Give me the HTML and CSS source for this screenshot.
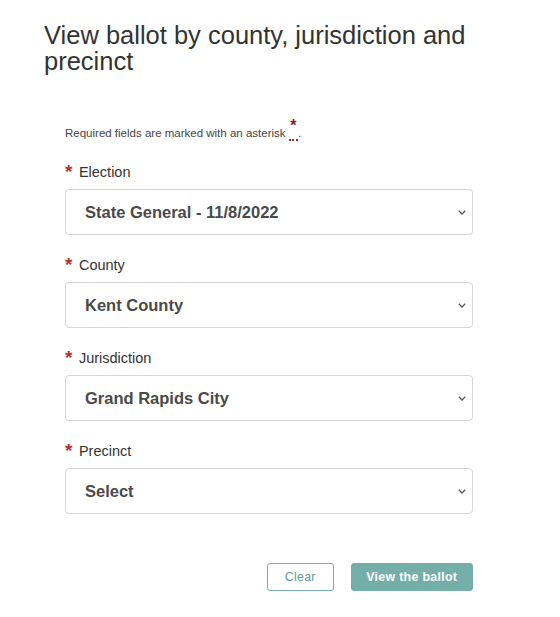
FILE: index.html
```html
<!DOCTYPE html>
<html lang="en">
<head>
<meta charset="utf-8">
<title>View ballot by county, jurisdiction and precinct</title>
<link rel="stylesheet" href="styles.css">
</head>
<body>
<main class="page">
  <h1 class="title">View ballot by county, jurisdiction and precinct</h1>
  <form class="form">
    <p class="req-note">Required fields are marked with an asterisk <abbr class="req-mark" title="required"><span class="req-star">*</span></abbr>.</p>

    <div class="field">
      <label class="label" for="election"><span class="star">*</span>Election</label>
      <div class="select-wrap">
        <select id="election" class="select">
          <option>State General - 11/8/2022</option>
        </select>
        <svg class="chevron" viewBox="0 0 8 5" aria-hidden="true"><path d="M0.8 0.8 L4 4 L7.2 0.8" fill="none" stroke="#555" stroke-width="1.3"/></svg>
      </div>
    </div>

    <div class="field">
      <label class="label" for="county"><span class="star">*</span>County</label>
      <div class="select-wrap">
        <select id="county" class="select">
          <option>Kent County</option>
        </select>
        <svg class="chevron" viewBox="0 0 8 5" aria-hidden="true"><path d="M0.8 0.8 L4 4 L7.2 0.8" fill="none" stroke="#555" stroke-width="1.3"/></svg>
      </div>
    </div>

    <div class="field">
      <label class="label" for="jurisdiction"><span class="star">*</span>Jurisdiction</label>
      <div class="select-wrap">
        <select id="jurisdiction" class="select">
          <option>Grand Rapids City</option>
        </select>
        <svg class="chevron" viewBox="0 0 8 5" aria-hidden="true"><path d="M0.8 0.8 L4 4 L7.2 0.8" fill="none" stroke="#555" stroke-width="1.3"/></svg>
      </div>
    </div>

    <div class="field">
      <label class="label" for="precinct"><span class="star">*</span>Precinct</label>
      <div class="select-wrap">
        <select id="precinct" class="select">
          <option>Select</option>
        </select>
        <svg class="chevron" viewBox="0 0 8 5" aria-hidden="true"><path d="M0.8 0.8 L4 4 L7.2 0.8" fill="none" stroke="#555" stroke-width="1.3"/></svg>
      </div>
    </div>

    <div class="actions">
      <button type="reset" class="btn btn-outline">Clear</button>
      <button type="submit" class="btn btn-primary">View the ballot</button>
    </div>
  </form>
</main>
</body>
</html>
```
FILE: styles.css
```css
html, body {
  margin: 0;
  padding: 0;
  background: #ffffff;
}

body {
  font-family: "Liberation Sans", Arial, sans-serif;
  color: #333333;
}

.page {
  padding: 23px 0 40px 44px;
}

.title {
  margin: 0;
  max-width: 480px;
  font-size: 25.5px;
  line-height: 25.5px;
  font-weight: normal;
  color: #333333;
}

.form {
  margin: 51px 0 0 21px;
  width: 408px;
}

.req-note {
  margin: 0 0 21px 0;
  font-size: 11.5px;
  line-height: 16px;
  color: #444444;
}

.req-mark {
  text-decoration: none;
  border-bottom: 2px dotted #9e2525;
  padding: 0 1.5px;
}

.req-star {
  font-size: 16px;
  font-weight: bold;
  line-height: 0;
  vertical-align: 6.5px;
  color: #8b1c1c;
}

.field {
  margin-bottom: 20.5px;
}

.label {
  display: block;
  font-size: 14.5px;
  line-height: 20px;
  color: #333333;
  margin-bottom: 7px;
}

.star {
  font-size: 19px;
  font-weight: bold;
  line-height: 0;
  vertical-align: -0.5px;
  color: #b5302e;
  margin-right: 6.5px;
}

.select-wrap {
  position: relative;
}

.select {
  display: block;
  width: 100%;
  height: 45.5px;
  margin: 0;
  padding: 0 30px 0 19px;
  -webkit-appearance: none;
  appearance: none;
  background: #ffffff;
  border: 1px solid #d6d6d6;
  border-radius: 4px;
  font-family: "Liberation Sans", Arial, sans-serif;
  font-size: 16.5px;
  font-weight: bold;
  color: #4a4a4a;
  box-sizing: border-box;
}

.chevron {
  position: absolute;
  right: 7px;
  top: 50%;
  width: 8px;
  height: 5px;
  margin-top: -2px;
  pointer-events: none;
}

.actions {
  display: flex;
  justify-content: flex-end;
  gap: 17px;
  margin-top: 49px;
}

.btn {
  height: 28px;
  box-sizing: border-box;
  border-radius: 3px;
  font-family: "Liberation Sans", Arial, sans-serif;
  font-size: 12.4px;
  letter-spacing: 0.3px;
  cursor: pointer;
  margin: 0;
}

.btn-outline {
  width: 66.5px;
  background: #ffffff;
  border: 1px solid #78b0ab;
  color: #6a9b97;
}

.btn-primary {
  width: 122.5px;
  background: #74aea8;
  border: 1px solid #74aea8;
  color: #ffffff;
  font-weight: bold;
}
```
